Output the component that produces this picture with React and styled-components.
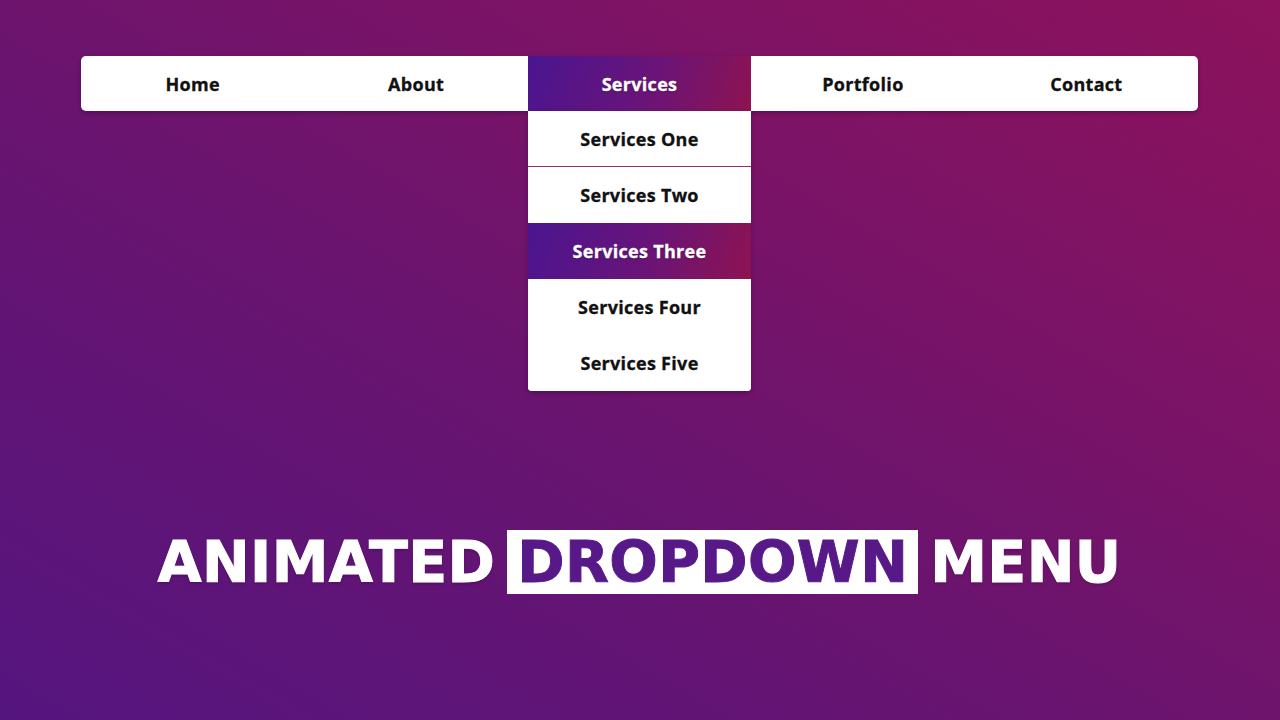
import React from "react";
import styled, { createGlobalStyle } from "styled-components";

const Global = createGlobalStyle`
  html, body { margin: 0; padding: 0; }
  body {
    width: 1280px;
    height: 720px;
    overflow: hidden;
    font-family: "Open Sans", "Liberation Sans", sans-serif;
  }
`;

const accent = "linear-gradient(110deg, #4a1590 0%, #6a1478 55%, #8e1350 100%)";

const Page = styled.div`
  width: 1280px;
  height: 720px;
  box-sizing: border-box;
  padding: 56px 82px 0 81px;
  display: flex;
  flex-direction: column;
  align-items: stretch;
  background: linear-gradient(30deg, #55157f 0%, #6a146f 45%, #7c1366 70%, #8c125c 100%);
`;

const Nav = styled.nav`
  display: flex;
  height: 55px;
  background: #fff;
  border-radius: 5px;
  box-shadow: 0 2px 4px rgba(40, 0, 40, 0.35);
`;

const NavItem = styled.div`
  position: relative;
  flex: 1;
  display: flex;
  align-items: center;
  justify-content: center;
  font-size: 18px;
  font-weight: 700;
  letter-spacing: 0.3px;
  color: ${(p) => (p.$active ? "#fff" : "#111")};
  background: ${(p) => (p.$active ? accent : "transparent")};
  text-shadow: ${(p) => (p.$active ? "0 1px 2px rgba(0,0,0,0.35)" : "none")};
  -webkit-text-stroke: 0.3px currentColor;
`;

const Dropdown = styled.div`
  position: absolute;
  top: 55px;
  left: 0;
  right: 0;
  background: #fff;
  border-radius: 0 0 4px 4px;
  box-shadow: 0 2px 4px rgba(40, 0, 40, 0.35);
  display: flex;
  flex-direction: column;
  overflow: hidden;
`;

const DropItem = styled.div`
  height: 56px;
  box-sizing: border-box;
  display: flex;
  align-items: center;
  justify-content: center;
  font-size: 18px;
  font-weight: 700;
  letter-spacing: 0.3px;
  color: ${(p) => (p.$active ? "#fff" : "#111")};
  background: ${(p) => (p.$active ? accent : "#fff")};
  text-shadow: ${(p) => (p.$active ? "0 1px 2px rgba(0,0,0,0.35)" : "none")};
  border-bottom: ${(p) => (p.$divider ? "1px solid #8a2f78" : "none")};
  -webkit-text-stroke: 0.3px currentColor;
`;

const Title = styled.h1`
  margin: 419px 0 0 0;
  display: flex;
  align-items: center;
  justify-content: center;
  gap: 12px;
  font-family: "DejaVu Sans", "Liberation Sans", sans-serif;
  font-weight: 700;
  font-size: 57px;
  letter-spacing: 0.4px;
  color: #fff;
  text-shadow: 0 2px 3px rgba(40, 0, 40, 0.3);
  -webkit-text-stroke: 1px currentColor;
`;

const Word = styled.span`
  line-height: 64px;
`;

const Boxed = styled.span`
  line-height: 64px;
  padding: 0 10px;
  background: #fff;
  color: #581988;
  text-shadow: none;
`;

const services = ["Services One", "Services Two", "Services Three", "Services Four", "Services Five"];

export default function App() {
  return (
    <>
      <Global />
      <Page>
        <Nav>
          <NavItem>Home</NavItem>
          <NavItem>About</NavItem>
          <NavItem $active>
            Services
            <Dropdown>
              {services.map((s, i) => (
                <DropItem key={s} $active={i === 2} $divider={i === 0}>
                  {s}
                </DropItem>
              ))}
            </Dropdown>
          </NavItem>
          <NavItem>Portfolio</NavItem>
          <NavItem>Contact</NavItem>
        </Nav>
        <Title>
          <Word>ANIMATED</Word>
          <Boxed>DROPDOWN</Boxed>
          <Word>MENU</Word>
        </Title>
      </Page>
    </>
  );
}
